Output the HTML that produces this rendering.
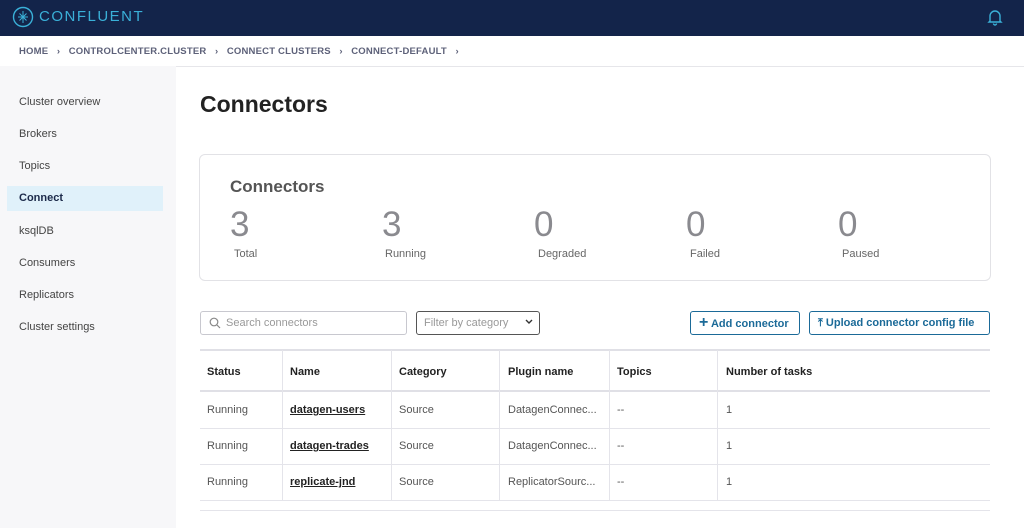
<!DOCTYPE html>
<html><head><style>
*{margin:0;padding:0;box-sizing:border-box}
body{width:1024px;height:528px;overflow:hidden;background:#fff;font-family:"Liberation Sans",sans-serif;color:#222;position:relative}
.a{position:absolute}
.hdr{left:0;top:0;width:1024px;height:36px;background:#13244a}
.bc{top:46px;font-size:9.5px;font-weight:bold;color:#5d6179;letter-spacing:.2px}
.side{left:0;top:66px;width:176px;height:462px;background:#f7f7f9}
.nav{left:19px;font-size:11px;color:#444}
.card{left:199px;top:154px;width:792px;height:127px;border:1px solid #e2e2e6;border-radius:6px}
.num{font-size:35px;font-weight:normal;color:#8a8a8f;top:205px}
.lbl{font-size:11px;color:#666;top:248px}
.th{top:366px;font-size:11px;font-weight:bold;color:#222}
.td{font-size:11px;color:#555}
.vl{width:1px;background:#e4e4ea;top:350px;height:150px}
.hl{left:200px;width:790px;height:1px;background:#e4e4ea}
.lnk{color:#222;font-weight:bold;text-decoration:underline}
.btn{top:311px;height:24px;border:1px solid #1b6a98;border-radius:3px;color:#1b6a98;font-size:11px;font-weight:bold;line-height:22px;padding-left:8px}
</style></head><body>
<div class="a hdr"></div>
<svg class="a" style="left:12px;top:6px" width="22" height="22" viewBox="0 0 22 22"><circle cx="11" cy="11" r="9.5" fill="none" stroke="#3ab0d8" stroke-width="1.4"/><path d="M11 5v12M6 11h10M7.5 7.5l7 7M14.5 7.5l-7 7" stroke="#3ab0d8" stroke-width="1"/></svg>
<div class="a" style="left:39px;top:8px;font-size:15px;color:#3ab0d8;letter-spacing:1.5px">CONFLUENT</div>
<svg class="a" style="left:987px;top:8px" width="16" height="18" viewBox="0 0 16 18"><path d="M3 13V8a5 5 0 0 1 10 0v5l1 1H2z M6.5 15.5a1.5 1.5 0 0 0 3 0" fill="none" stroke="#3ab0d8" stroke-width="1.4"/></svg>
<div class="a bc" style="left:19px">HOME &nbsp;&nbsp;›&nbsp;&nbsp; CONTROLCENTER.CLUSTER &nbsp;&nbsp;›&nbsp;&nbsp; CONNECT CLUSTERS &nbsp;&nbsp;›&nbsp;&nbsp; CONNECT-DEFAULT &nbsp;&nbsp;›</div>
<div class="a" style="left:0;top:66px;width:1024px;height:1px;background:#e6e6ea"></div>
<div class="a side"></div>
<div class="a nav" style="top:96px">Cluster overview</div>
<div class="a nav" style="top:128px">Brokers</div>
<div class="a nav" style="top:160px">Topics</div>
<div class="a" style="left:7px;top:186px;width:156px;height:25px;background:#e0f1fa"></div>
<div class="a nav" style="top:192px;font-weight:bold;color:#1c2a4a">Connect</div>
<div class="a nav" style="top:225px">ksqlDB</div>
<div class="a nav" style="top:257px">Consumers</div>
<div class="a nav" style="top:289px">Replicators</div>
<div class="a nav" style="top:321px">Cluster settings</div>
<div class="a" style="left:200px;top:91px;font-size:23px;font-weight:bold;color:#222">Connectors</div>
<div class="a card"></div>
<div class="a" style="left:230px;top:177px;font-size:17px;font-weight:bold;color:#555">Connectors</div>
<div class="a num" style="left:230px">3</div><div class="a lbl" style="left:234px">Total</div>
<div class="a num" style="left:382px">3</div><div class="a lbl" style="left:385px">Running</div>
<div class="a num" style="left:534px">0</div><div class="a lbl" style="left:538px">Degraded</div>
<div class="a num" style="left:686px">0</div><div class="a lbl" style="left:690px">Failed</div>
<div class="a num" style="left:838px">0</div><div class="a lbl" style="left:842px">Paused</div>
<div class="a" style="left:200px;top:311px;width:207px;height:24px;border:1px solid #c8c8cf;border-radius:3px"></div>
<svg class="a" style="left:209px;top:317px" width="12" height="12" viewBox="0 0 12 12"><circle cx="5" cy="5" r="3.8" fill="none" stroke="#888" stroke-width="1.2"/><path d="M8 8l3 3" stroke="#888" stroke-width="1.2"/></svg>
<div class="a" style="left:226px;top:317px;font-size:11px;color:#999">Search connectors</div>
<div class="a" style="left:416px;top:311px;width:124px;height:24px;border:1px solid #555;border-radius:3px"></div>
<div class="a" style="left:424px;top:317px;font-size:11px;color:#999">Filter by category</div>
<svg class="a" style="left:525px;top:319px" width="8" height="6" viewBox="0 0 8 6"><path d="M1 1l3 3 3-3" fill="none" stroke="#333" stroke-width="1.4"/></svg>
<div class="a btn" style="left:690px;width:110px"><span style="font-size:16px;font-weight:bold">+</span> Add connector</div>
<div class="a btn" style="left:809px;width:181px">⤒ Upload connector config file</div>
<div class="a" style="left:200px;top:349px;width:790px;height:2px;background:#e0e0e6"></div>
<div class="a" style="left:200px;top:390px;width:790px;height:2px;background:#e0e0e6"></div>
<div class="a hl" style="top:428px"></div>
<div class="a hl" style="top:464px"></div>
<div class="a hl" style="top:500px"></div>
<div class="a hl" style="top:510px"></div>
<div class="a vl" style="left:282px"></div><div class="a vl" style="left:391px"></div><div class="a vl" style="left:499px"></div><div class="a vl" style="left:609px"></div><div class="a vl" style="left:717px"></div>
<div class="a th" style="left:207px">Status</div><div class="a th" style="left:290px">Name</div><div class="a th" style="left:399px">Category</div><div class="a th" style="left:508px">Plugin name</div><div class="a th" style="left:617px">Topics</div><div class="a th" style="left:726px">Number of tasks</div>
<div class="a td" style="left:207px;top:404px">Running</div><div class="a td lnk" style="left:290px;top:404px">datagen-users</div><div class="a td" style="left:399px;top:404px">Source</div><div class="a td" style="left:508px;top:404px">DatagenConnec...</div><div class="a td" style="left:617px;top:404px">--</div><div class="a td" style="left:726px;top:404px">1</div>
<div class="a td" style="left:207px;top:440px">Running</div><div class="a td lnk" style="left:290px;top:440px">datagen-trades</div><div class="a td" style="left:399px;top:440px">Source</div><div class="a td" style="left:508px;top:440px">DatagenConnec...</div><div class="a td" style="left:617px;top:440px">--</div><div class="a td" style="left:726px;top:440px">1</div>
<div class="a td" style="left:207px;top:476px">Running</div><div class="a td lnk" style="left:290px;top:476px">replicate-jnd</div><div class="a td" style="left:399px;top:476px">Source</div><div class="a td" style="left:508px;top:476px">ReplicatorSourc...</div><div class="a td" style="left:617px;top:476px">--</div><div class="a td" style="left:726px;top:476px">1</div>
</body></html>
